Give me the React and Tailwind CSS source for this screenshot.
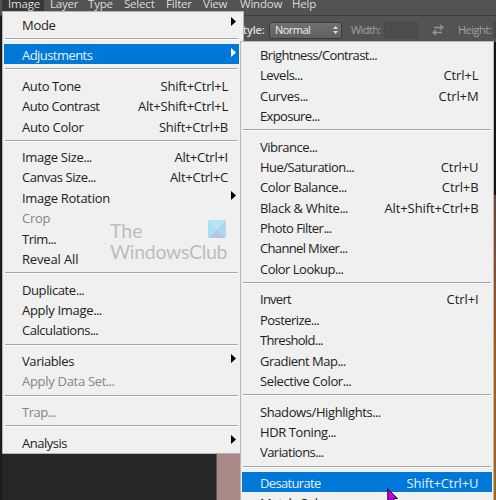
const imageMenu = [
  [{ label: 'Mode', sub: true, ls: 'tracking-[-0.3px]' }],
  [{ label: 'Adjustments', sub: true, active: true, ls: 'tracking-[-0.55px]' }],
  [
    { label: 'Auto Tone', keys: 'Shift+Ctrl+L', ls: 'tracking-[-0.4px]' },
    { label: 'Auto Contrast', keys: 'Alt+Shift+Ctrl+L', ls: 'tracking-[-0.5px]' },
    { label: 'Auto Color', keys: 'Shift+Ctrl+B' },
  ],
  [
    { label: 'Image Size...', keys: 'Alt+Ctrl+I', ls: 'tracking-[-0.3px]' },
    { label: 'Canvas Size...', keys: 'Alt+Ctrl+C', ls: 'tracking-[-0.45px]' },
    { label: 'Image Rotation', sub: true },
    { label: 'Crop', disabled: true },
    { label: 'Trim...', ls: 'tracking-[-0.5px]' },
    { label: 'Reveal All', ls: 'tracking-[-0.15px]' },
  ],
  [
    { label: 'Duplicate...', ls: 'tracking-[-0.4px]' },
    { label: 'Apply Image...', ls: 'tracking-[-0.3px]' },
    { label: 'Calculations...', ls: 'tracking-[-0.45px]' },
  ],
  [
    { label: 'Variables', sub: true, ls: 'tracking-[-0.4px]' },
    { label: 'Apply Data Set...', disabled: true, ls: 'tracking-[-0.3px]' },
  ],
  [{ label: 'Trap...', disabled: true, ls: 'tracking-[-0.5px]' }],
  [{ label: 'Analysis', sub: true, ls: 'tracking-[-0.5px]' }],
];

const adjustmentsMenu = [
  [
    { label: 'Brightness/Contrast...', ls: 'tracking-[-0.65px]' },
    { label: 'Levels...', keys: 'Ctrl+L', ls: 'tracking-[-0.5px]' },
    { label: 'Curves...', keys: 'Ctrl+M' },
    { label: 'Exposure...', ls: 'tracking-[-0.65px]' },
  ],
  [
    { label: 'Vibrance...', ls: 'tracking-[-0.5px]' },
    { label: 'Hue/Saturation...', keys: 'Ctrl+U', ls: 'tracking-[-0.5px]' },
    { label: 'Color Balance...', keys: 'Ctrl+B', ls: 'tracking-[-0.4px]' },
    { label: 'Black & White...', keys: 'Alt+Shift+Ctrl+B' },
    { label: 'Photo Filter...', ls: 'tracking-[-0.55px]' },
    { label: 'Channel Mixer...', ls: 'tracking-[-0.65px]' },
    { label: 'Color Lookup...', ls: 'tracking-[-0.5px]' },
  ],
  [
    { label: 'Invert', keys: 'Ctrl+I', ls: 'tracking-[-0.75px]' },
    { label: 'Posterize...', ls: 'tracking-[-0.55px]' },
    { label: 'Threshold...', ls: 'tracking-[-0.7px]' },
    { label: 'Gradient Map...', ls: 'tracking-[-0.5px]' },
    { label: 'Selective Color...', ls: 'tracking-[-0.4px]' },
  ],
  [
    { label: 'Shadows/Highlights...', ls: 'tracking-[-0.4px]' },
    { label: 'HDR Toning...', ls: 'tracking-[-0.4px]' },
    { label: 'Variations...', ls: 'tracking-[-0.55px]' },
  ],
  [{ label: 'Desaturate', keys: 'Shift+Ctrl+U', active: true, ls: 'tracking-[-0.65px]' }, { label: 'Match Color...' }],
];

const menuBar = [
  { label: 'Image', w: 'w-[42px]', open: true },
  { label: 'Layer', w: 'w-[38px]' },
  { label: 'Type', w: 'w-[36px]' },
  { label: 'Select', w: 'w-[42px]' },
  { label: 'Filter', w: 'w-[37px]' },
  { label: 'View', w: 'w-[37px]' },
  { label: 'Window', w: 'w-[52px]' },
  { label: 'Help', w: 'w-[40px]' },
];

function MenuRow({ item, keysClass }) {
  const color = item.active ? 'bg-[#0078d7] text-[#e4f1fc]' : item.disabled ? 'text-[#858585]' : 'text-[#222]';
  const dots = item.label.endsWith('...');
  return (
    <div className={`relative flex h-[20.4px] items-center justify-between pt-[2px] pl-[18px] ${color}`}>
      <span className={item.ls || 'tracking-[-0.3px]'}>
        {dots ? item.label.slice(0, -3) : item.label}
        {dots && <span className="tracking-[-0.7px]">...</span>}
      </span>
      {item.keys && <span className={keysClass}>{item.keys}</span>}
      {item.sub && (
        <svg className={`absolute top-[4px] right-[3.5px] h-[9px] w-[5px] ${item.active ? 'fill-white' : 'fill-black'}`} viewBox="0 0 5 9">
          <path d="M0 0L5 4.5L0 9Z" />
        </svg>
      )}
    </div>
  );
}

function Menu({ groups, keysClass }) {
  return groups.map((group, i) => (
    <div key={i}>
      {i > 0 && (
        <div className="flex h-[10.2px] items-center px-[1px]">
          <div className="h-[2px] w-full border-t border-[#a5a5a5] bg-white" />
        </div>
      )}
      {group.map((item) => <MenuRow key={item.label} item={item} keysClass={keysClass} />)}
    </div>
  ));
}

function Watermark() {
  return (
    <div className="absolute top-[220px] left-[110px] w-[120px] font-[Lato] text-[19.5px] leading-[21px] text-[#bdbdbd]">
      <div>The</div>
      <div className="tracking-[-0.3px]">WindowsClub</div>
      <svg className="absolute top-0 left-[98px] h-[18px] w-[18px]" viewBox="0 0 18 18">
        <path d="M0 0H18L9 9Z" fill="#b3e7f5" />
        <path d="M0 0L9 9L0 18Z" fill="#a9def3" />
        <path d="M18 0V18L9 9Z" fill="#add6f1" />
        <path d="M0 18L9 9L18 18Z" fill="#b5c5ec" />
      </svg>
    </div>
  );
}

function App() {
  return (
    <div className="relative h-[500px] w-[496px] overflow-hidden bg-[#262626] font-['Open_Sans','Noto_Sans',sans-serif] text-[13px] leading-[18px] whitespace-nowrap">
      <div className="flex h-[15px] bg-[#535353] pl-[2px] text-[11.5px] leading-[8px] tracking-[-0.2px] text-[#dcdcdc]">
        {menuBar.map((m) => (
          <div key={m.label} className={`h-full pl-[6px] ${m.w} ${m.open ? 'bg-[#383838]' : ''}`}>{m.label}</div>
        ))}
      </div>
      <div className="flex h-[29px] items-center overflow-hidden border-t border-[#3c3c3c] bg-[#535353] pl-[237px] text-[11px] text-[#a2a2a2]">
        <span className="w-[32px] shrink-0 font-semibold tracking-[-0.2px] text-[#dedede]">Style:</span>
        <div className="flex h-[17px] w-[73px] shrink-0 items-center justify-between rounded-[2px] border border-[#3a3a3a] bg-linear-to-b from-[#707070] to-[#606060] pr-[3px] pl-[5px] text-[#eee]">
          <span className="tracking-[-0.55px]">Normal</span>
          <svg className="h-[8px] w-[5px] fill-[#ddd]" viewBox="0 0 5 8">
            <path d="M0 3L2.5 0L5 3ZM0 5L2.5 8L5 5Z" />
          </svg>
        </div>
        <span className="ml-[9px] w-[33px] shrink-0 font-medium tracking-[-0.6px]">Width:</span>
        <div className="h-[16px] w-[34px] shrink-0 border border-[#474747] bg-[#4c4c4c]" />
        <svg className="ml-[14px] h-[12px] w-[12px] shrink-0 fill-none stroke-[#929292]" viewBox="0 0 12 12" strokeWidth="1.4">
          <path d="M2 3.5H11M8 1L11 3.5L8 6M10 8.5H1M4 6L1 8.5L4 11" />
        </svg>
        <span className="ml-[14px] w-[36px] shrink-0 font-medium tracking-[-0.5px]">Height:</span>
        <div className="h-[16px] w-[10px] shrink-0 border border-[#414141] bg-[#4a4a4a]" />
      </div>

      {/* edges of the open document */}
      <div className="absolute top-[42px] right-0 h-[153px] w-[3px] bg-[#151515]" />
      <div className="absolute top-[195px] right-0 h-[305px] w-[3px] bg-linear-to-b from-[#66453f] via-[#a65a12] to-[#9a681c]" />
      <div className="absolute top-[453px] left-[216px] h-[47px] w-[26px] border-l border-[#555] bg-[#aa8988]" />
      <div className="absolute top-[16px] left-0 h-[484px] w-[2px] bg-[#1b1b1b]" />

      <div className="absolute top-[11px] left-[2px] h-[443px] w-[242px] border border-[#b5b5b5] bg-[#f0f0f0] pt-[1.4px] pr-[4px] pl-[1px]">
        <Menu groups={imageMenu} keysClass="pr-[11px] tracking-[-0.25px]" />
      </div>
      <Watermark />

      <div className="absolute top-[41px] left-[240px] h-[470px] w-[254px] border border-[#b8b8b8] bg-[#f0f0f0] px-[1px] pt-[1.6px]">
        <Menu groups={adjustmentsMenu} keysClass="pr-[13.5px] tracking-[-0.1px]" />
      </div>

      <svg className="absolute top-[488px] left-[387px] h-[18px] w-[13px]" viewBox="0 0 13 18">
        <path d="M.8 .8V14.5L4 11.5L6.5 17L9 16L6.6 10.5H10.5Z" fill="#c400f0" stroke="#16001c" />
      </svg>
    </div>
  );
}

export default App;
